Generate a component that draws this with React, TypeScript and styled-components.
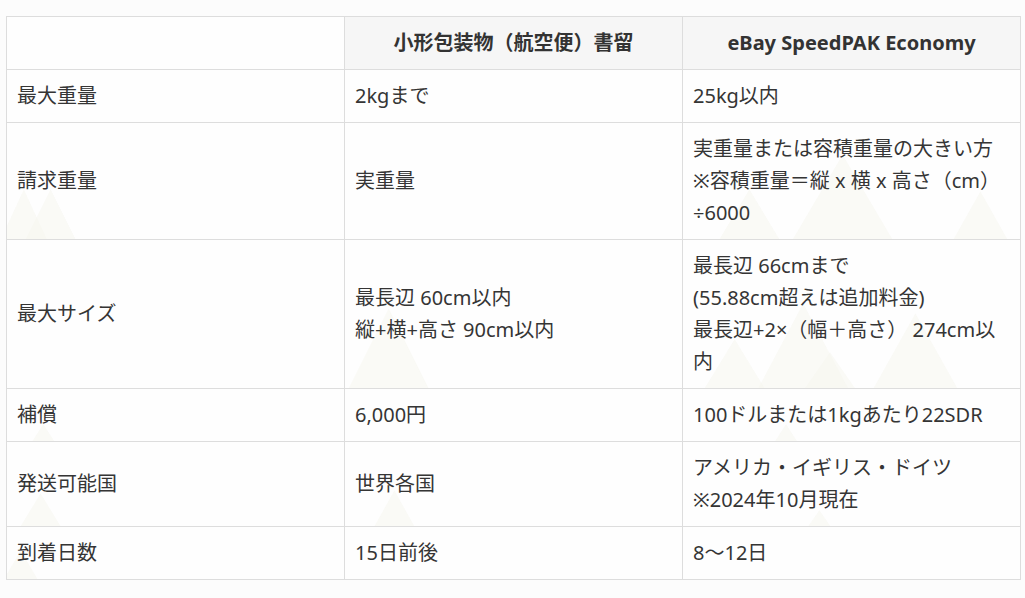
import * as React from "react"
import styled, {createGlobalStyle} from "styled-components"

interface Peak {
  x: number
  w: number
  h: number
}

interface Cell {
  lines: string[]
  peaks?: Peak[]
}

interface Row {
  label: Cell
  small: Cell
  speed: Cell
}

const GlobalStyle = createGlobalStyle`
  html, body {
    margin: 0;
    padding: 0;
    background: #fcfcfc;
  }
  body {
    font-family: "Noto Sans", "Noto Sans CJK JP", sans-serif;
    color: #333;
  }
`

const Page = styled.div`
  width: 1025px;
  height: 598px;
  padding: 16px 4px 0 6px;
  box-sizing: border-box;
`

const Table = styled.table`
  width: 1015px;
  table-layout: fixed;
  border-collapse: collapse;
  background: #fefefe;
  font-size: 20px;
  line-height: 32px;
`

const Head = styled.th<{$blank?: boolean}>`
  border: 1px solid #dddddd;
  padding: 10px 11px;
  font-weight: 700;
  text-align: center;
  background: ${p => (p.$blank ? "#fefefe" : "#f6f6f6")};
  color: #333;
`

const Td = styled.td`
  position: relative;
  border: 1px solid #dddddd;
  padding: 10px 11px 10px 10px;
  vertical-align: middle;
  color: #353535;
  overflow: hidden;
`

const Text = styled.span`
  position: relative;
  z-index: 1;
`

// faint mountain decoration that sits at the bottom of some cells
const Hills = styled.svg`
  position: absolute;
  left: 0;
  bottom: 0;
  width: 100%;
  height: 100%;
  pointer-events: none;
`

const Peaks = ({peaks, height}: {peaks: Peak[], height: number}) => (
  <Hills viewBox={`0 0 338 ${height}`} preserveAspectRatio="xMinYMax meet">
    {peaks.map((p, i) => (
      <polygon
        key={i}
        fill="#f5f5ee"
        opacity={0.55}
        points={`${p.x - p.w / 2},${height} ${p.x},${height - p.h} ${p.x + p.w / 2},${height}`}
      />
    ))}
  </Hills>
)

const rows: Row[] = [
  {
    label: {lines: ["最大重量"]},
    small: {lines: ["2kgまで"]},
    speed: {lines: ["25kg以内"]},
  },
  {
    label: {lines: ["請求重量"], peaks: [{x: 17, w: 46, h: 50}, {x: 44, w: 50, h: 50}]},
    small: {lines: ["実重量"]},
    speed: {
      lines: ["実重量または容積重量の大きい方", "※容積重量＝縦 x 横 x 高さ（cm）", "÷6000"],
      peaks: [{x: 67, w: 60, h: 50}, {x: 161, w: 100, h: 85}, {x: 300, w: 54, h: 48}],
    },
  },
  {
    label: {lines: ["最大サイズ"]},
    small: {lines: ["最長辺 60cm以内", "縦+横+高さ 90cm以内"], peaks: [{x: 44, w: 80, h: 80}]},
    speed: {
      lines: ["最長辺 66cmまで", "(55.88cm超えは追加料金)", "最長辺+2×（幅＋高さ） 274cm以内"],
      peaks: [{x: 52, w: 60, h: 49}, {x: 121, w: 90, h: 85}, {x: 148, w: 50, h: 36}, {x: 234, w: 84, h: 75}],
    },
  },
  {
    label: {lines: ["補償"], peaks: [{x: 37, w: 22, h: 17}]},
    small: {lines: ["6,000円"]},
    speed: {lines: ["100ドルまたは1kgあたり22SDR"], peaks: [{x: 105, w: 22, h: 17}]},
  },
  {
    label: {lines: ["発送可能国"], peaks: [{x: 34, w: 40, h: 33}]},
    small: {lines: ["世界各国"], peaks: [{x: 50, w: 40, h: 36}]},
    speed: {lines: ["アメリカ・イギリス・ドイツ", "※2024年10月現在"], peaks: [{x: 138, w: 22, h: 16}]},
  },
  {
    label: {lines: ["到着日数"], peaks: [{x: 14, w: 34, h: 29}]},
    small: {lines: ["15日前後"]},
    speed: {lines: ["8〜12日"]},
  },
]

const heights = [53, 117, 149, 53, 85, 53]

const CellView = ({cell, height}: {cell: Cell, height: number}) => (
  <Td>
    {cell.peaks && <Peaks peaks={cell.peaks} height={height} />}
    <Text>
      {cell.lines.map((line, i) => (
        <React.Fragment key={i}>
          {i > 0 && <br />}
          {line}
        </React.Fragment>
      ))}
    </Text>
  </Td>
)

const App = () => {
  return (
    <Page>
      <GlobalStyle />
      <Table>
        <thead>
          <tr>
            <Head $blank></Head>
            <Head>小形包装物（航空便）書留</Head>
            <Head>eBay SpeedPAK Economy</Head>
          </tr>
        </thead>
        <tbody>
          {rows.map((row, i) => (
            <tr key={i}>
              <CellView cell={row.label} height={heights[i]} />
              <CellView cell={row.small} height={heights[i]} />
              <CellView cell={row.speed} height={heights[i]} />
            </tr>
          ))}
        </tbody>
      </Table>
    </Page>
  )
}

export default App
